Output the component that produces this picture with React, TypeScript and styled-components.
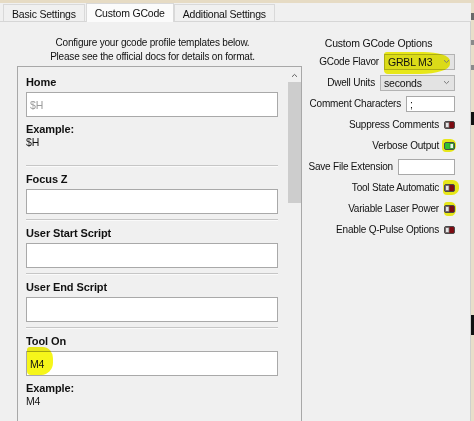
import React from "react";
import styled, { createGlobalStyle } from "styled-components";

const GlobalStyle = createGlobalStyle`
  html, body {
    margin: 0;
    padding: 0;
    background: #f0f0f0;
  }
  #root {
    width: 474px;
    height: 421px;
    overflow: hidden;
  }
  * {
    box-sizing: border-box;
  }
`;

type Section = {
  label: string;
  value?: string;
  placeholder?: string;
  example?: string;
  mark?: boolean;
};

const sections: Section[] = [
  { label: "Home", placeholder: "$H", example: "$H" },
  { label: "Focus Z" },
  { label: "User Start Script" },
  { label: "User End Script" },
  { label: "Tool On", value: "M4", example: "M4", mark: true },
];

const Toggle = ({ on }: { on?: boolean }) => (
  <svg width="11" height="8" viewBox="0 0 11 8">
    <rect x="0.5" y="0.5" width="10" height="7" rx="1.5" fill={on ? "#2fc22f" : "#7d0b12"} stroke="#4a4a4a" />
    <rect
      x={on ? 6 : 1.5}
      y="1.5"
      width="3.5"
      height="5"
      fill={on ? "#e9f7e9" : "#e6e6e6"}
      stroke={on ? "#2b8a2b" : "#6a6a6a"}
      strokeWidth="0.8"
    />
  </svg>
);

const Chevron = () => (
  <svg width="7" height="5" viewBox="0 0 7 5">
    <path d="M1 1.2 L3.5 3.6 L6 1.2" fill="none" stroke="#7a7a7a" strokeWidth="1" />
  </svg>
);

export default function App() {
  return (
    <>
      <GlobalStyle />
      <Screen>
        <TopBand />
        <Body>
          <Main>
            <TabBar>
              <Tab>Basic Settings</Tab>
              <Tab $active>Custom GCode</Tab>
              <Tab>Additional Settings</Tab>
            </TabBar>
            <Panel>
              <LeftColumn>
                <Intro>
                  Configure your gcode profile templates below.
                  <br />
                  Please see the official docs for details on format.
                </Intro>
                <ScrollBox>
                  <ScrollContent>
                    {sections.map((s, i) => (
                      <Field key={s.label} $first={i === 0}>
                        <FieldLabel>{s.label}</FieldLabel>
                        <TextBox $placeholder={!!s.placeholder}>
                          {s.mark && <Marker $w={26} $h={28} $x={0} $y={-5} />}
                          <Value>{s.value ?? s.placeholder}</Value>
                        </TextBox>
                        {s.example && (
                          <Example>
                            <FieldLabel>Example:</FieldLabel>
                            <ExampleValue>{s.example}</ExampleValue>
                          </Example>
                        )}
                      </Field>
                    ))}
                  </ScrollContent>
                  <ScrollBar>
                    <ArrowUp>
                      <svg width="7" height="5" viewBox="0 0 7 5">
                        <path d="M1 3.8 L3.5 1.4 L6 3.8" fill="none" stroke="#606060" strokeWidth="1" />
                      </svg>
                    </ArrowUp>
                    <Thumb />
                  </ScrollBar>
                </ScrollBox>
              </LeftColumn>
              <RightColumn>
                <OptionsTitle>Custom GCode Options</OptionsTitle>
                <OptionRow>
                  <OptionLabel>GCode Flavor</OptionLabel>
                  <Combo $w={71}>
                    <Marker $w={66} $h={22} $x={-1} $y={-3} />
                    <Value>GRBL M3</Value>
                    <Value>
                      <Chevron />
                    </Value>
                  </Combo>
                </OptionRow>
                <OptionRow>
                  <OptionLabel>Dwell Units</OptionLabel>
                  <Combo $w={75}>
                    <Value>seconds</Value>
                    <Value>
                      <Chevron />
                    </Value>
                  </Combo>
                </OptionRow>
                <OptionRow>
                  <OptionLabel>Comment Characters</OptionLabel>
                  <SmallInput $w={49}>;</SmallInput>
                </OptionRow>
                <OptionRow>
                  <OptionLabel>Suppress Comments</OptionLabel>
                  <ToggleWrap>
                    <Toggle />
                  </ToggleWrap>
                </OptionRow>
                <OptionRow>
                  <OptionLabel>Verbose Output</OptionLabel>
                  <ToggleWrap>
                    <Marker $w={14} $h={13} $x={-2} $y={-3} />
                    <Value>
                      <Toggle on />
                    </Value>
                  </ToggleWrap>
                </OptionRow>
                <OptionRow>
                  <OptionLabel>Save File Extension</OptionLabel>
                  <SmallInput $w={57} />
                </OptionRow>
                <OptionRow>
                  <OptionLabel>Tool State Automatic</OptionLabel>
                  <ToggleWrap>
                    <Marker $w={16} $h={15} $x={-1} $y={-4} />
                    <Value>
                      <Toggle />
                    </Value>
                  </ToggleWrap>
                </OptionRow>
                <OptionRow>
                  <OptionLabel>Variable Laser Power</OptionLabel>
                  <ToggleWrap>
                    <Marker $w={12} $h={14} $x={0} $y={-3} />
                    <Value>
                      <Toggle />
                    </Value>
                  </ToggleWrap>
                </OptionRow>
                <OptionRow>
                  <OptionLabel>Enable Q-Pulse Options</OptionLabel>
                  <ToggleWrap>
                    <Toggle />
                  </ToggleWrap>
                </OptionRow>
              </RightColumn>
            </Panel>
          </Main>
          <EdgeStrip>
            <EdgeMark $h={7} $top={10} $c="#6a6a6a" />
            <EdgeMark $h={5} $top={20} $c="#8a8a8a" />
            <EdgeMark $h={5} $top={20} $c="#8a8a8a" />
            <EdgeMark $h={13} $top={42} $c="#111" />
            <EdgeMark $h={20} $top={190} $c="#111" />
          </EdgeStrip>
        </Body>
      </Screen>
    </>
  );
}

const FONT = `"Liberation Sans", Arial, sans-serif`;

const Screen = styled.div`
  width: 474px;
  height: 421px;
  display: flex;
  flex-direction: column;
  background: #f0f0f0;
  font-family: ${FONT};
  font-size: 10px;
  letter-spacing: -0.2px;
  color: #111;
  overflow: hidden;
`;

const TopBand = styled.div`
  height: 3px;
  flex-shrink: 0;
  background: #e6dbc4;
`;

const Body = styled.div`
  flex: 1;
  display: flex;
  min-height: 0;
`;

const Main = styled.div`
  width: 471px;
  display: flex;
  flex-direction: column;
`;

const TabBar = styled.div`
  height: 19px;
  display: flex;
  align-items: flex-end;
  padding-left: 3px;
  border-bottom: 1px solid #d6d6d6;
  flex-shrink: 0;
`;

const Tab = styled.div<{ $active?: boolean }>`
  height: ${(p) => (p.$active ? "19px" : "17px")};
  margin-bottom: ${(p) => (p.$active ? "-1px" : "0")};
  padding: ${(p) => (p.$active ? "0" : "1px")} 8px 0;
  display: flex;
  align-items: center;
  border: 1px solid #d9d9d9;
  border-bottom: none;
  margin-right: ${(p) => (p.$active ? "0" : "1px")};
  background: ${(p) => (p.$active ? "#fbfbfb" : "#f0f0f0")};
  font-size: 10.5px;
`;

const Panel = styled.div`
  flex: 1;
  display: flex;
  border-right: 1px solid #cfcfcf;
  padding-left: 17px;
  min-height: 0;
`;

const LeftColumn = styled.div`
  width: 285px;
  flex-shrink: 0;
  display: flex;
  flex-direction: column;
`;

const Intro = styled.div`
  padding: 14px 14px 0 0;
  text-align: center;
  line-height: 14px;
  white-space: nowrap;
`;

const ScrollBox = styled.div`
  margin-top: 2px;
  flex: 1;
  display: flex;
  border: 1px solid #a8a8a8;
  border-bottom: none;
  overflow: hidden;
`;

const ScrollContent = styled.div`
  flex: 1;
  padding: 0 9px 0 8px;
`;

const Field = styled.div<{ $first?: boolean }>`
  padding: ${(p) => (p.$first ? "8px" : "6px")} 0 5px;
  border-bottom: 1px solid #c6c6c6;
  box-shadow: 0 1px 0 #fafafa;
`;

const FieldLabel = styled.div`
  font-weight: bold;
  font-size: 11px;
  letter-spacing: -0.1px;
  line-height: 14px;
`;

const TextBox = styled.div<{ $placeholder?: boolean }>`
  position: relative;
  margin-top: 3px;
  height: 25px;
  background: #fff;
  border: 1px solid #a9a9a9;
  padding: 0 3px;
  display: flex;
  align-items: center;
  font-size: 10.5px;
  color: ${(p) => (p.$placeholder ? "#9a9a9a" : "#111")};
`;

const Value = styled.span`
  position: relative;
  display: flex;
  align-items: center;
`;

const Example = styled.div`
  margin-top: 5px;
  padding-bottom: 11px;
`;

const ExampleValue = styled.div`
  font-size: 10.5px;
  line-height: 13px;
`;

const ScrollBar = styled.div`
  width: 14px;
  display: flex;
  flex-direction: column;
  align-items: center;
  background: #f0f0f0;
`;

const ArrowUp = styled.div`
  height: 15px;
  display: flex;
  align-items: center;
  justify-content: center;
  padding-top: 2px;
`;

const Thumb = styled.div`
  width: 13px;
  height: 121px;
  background: #cdcdcd;
`;

const RightColumn = styled.div`
  flex: 1;
  min-width: 0;
  display: flex;
  flex-direction: column;
  align-items: flex-end;
  padding-right: 15px;
`;

const OptionsTitle = styled.div`
  align-self: center;
  margin: 14px 0 1px 0;
  line-height: 14px;
  font-size: 10.5px;
  white-space: nowrap;
`;

const OptionRow = styled.div`
  height: 21px;
  display: flex;
  align-items: center;
  gap: 5px;
  white-space: nowrap;
`;

const OptionLabel = styled.span``;

const Combo = styled.div<{ $w: number }>`
  position: relative;
  width: ${(p) => p.$w}px;
  height: 16px;
  background: #e3e3e3;
  border: 1px solid #b3b3b3;
  display: flex;
  align-items: center;
  justify-content: space-between;
  padding: 0 4px 0 3px;
  font-size: 10.5px;
`;

const SmallInput = styled.div<{ $w: number }>`
  width: ${(p) => p.$w}px;
  height: 16px;
  background: #fff;
  border: 1px solid #a9a9a9;
  padding: 0 3px;
  display: flex;
  align-items: center;
  font-size: 10.5px;
`;

const ToggleWrap = styled.span`
  position: relative;
  width: 11px;
  height: 8px;
  display: flex;
`;

const Marker = styled.i<{ $w: number; $h: number; $x: number; $y: number }>`
  position: absolute;
  left: ${(p) => p.$x}px;
  top: ${(p) => p.$y}px;
  width: ${(p) => p.$w}px;
  height: ${(p) => p.$h}px;
  background: #f6f61a;
  border-radius: 3px 40% 45% 4px;
  mix-blend-mode: multiply;
`;

const EdgeStrip = styled.div`
  width: 3px;
  background: #e8dec9;
  display: flex;
  flex-direction: column;
`;

const EdgeMark = styled.div<{ $h: number; $top: number; $c: string }>`
  height: ${(p) => p.$h}px;
  margin-top: ${(p) => p.$top}px;
  background: ${(p) => p.$c};
`;
